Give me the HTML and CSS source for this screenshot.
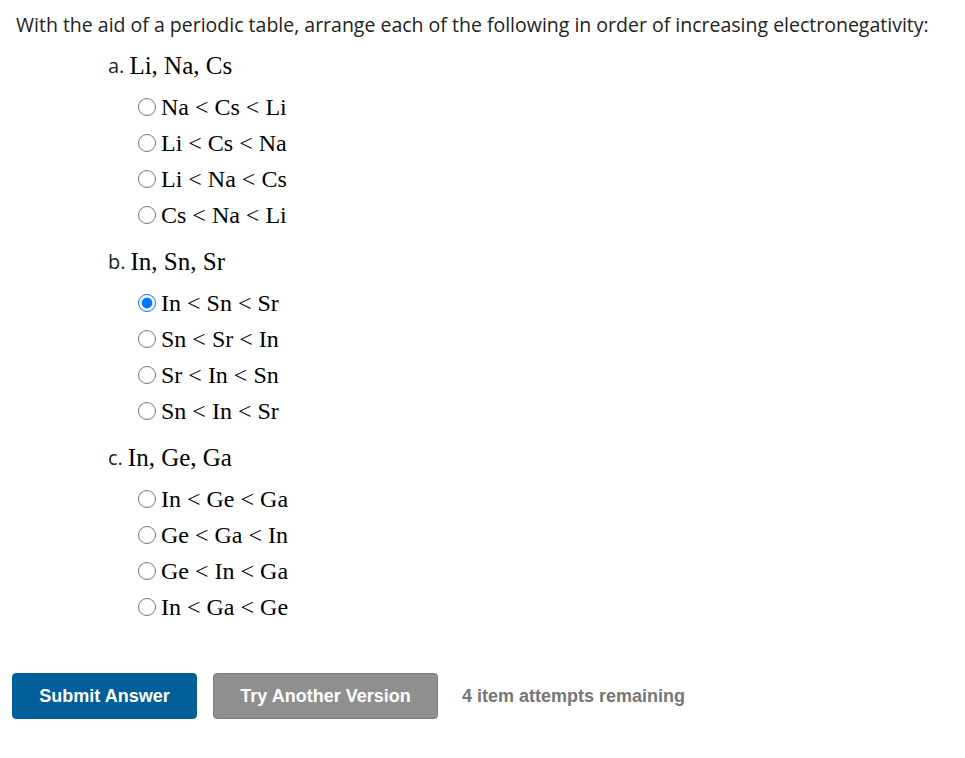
FILE: index.html
```html
<!DOCTYPE html>
<html lang="en">
<head>
    <meta charset="UTF-8">
    <title>Electronegativity</title>
    <link rel="stylesheet" href="styles.css">
</head>
<body>
    <div class="question">
        <p class="prompt">With the aid of a periodic table, arrange each of the following in order of increasing electronegativity:</p>

        <div class="part">
            <div class="part-label">a. <span class="math">Li, Na, Cs</span></div>
            <label class="option"><input type="radio" name="a"><span class="math">Na &lt; Cs &lt; Li</span></label>
            <label class="option"><input type="radio" name="a"><span class="math">Li &lt; Cs &lt; Na</span></label>
            <label class="option"><input type="radio" name="a"><span class="math">Li &lt; Na &lt; Cs</span></label>
            <label class="option"><input type="radio" name="a"><span class="math">Cs &lt; Na &lt; Li</span></label>
        </div>

        <div class="part">
            <div class="part-label">b. <span class="math">In, Sn, Sr</span></div>
            <label class="option"><input type="radio" name="b" checked><span class="math">In &lt; Sn &lt; Sr</span></label>
            <label class="option"><input type="radio" name="b"><span class="math">Sn &lt; Sr &lt; In</span></label>
            <label class="option"><input type="radio" name="b"><span class="math">Sr &lt; In &lt; Sn</span></label>
            <label class="option"><input type="radio" name="b"><span class="math">Sn &lt; In &lt; Sr</span></label>
        </div>

        <div class="part">
            <div class="part-label">c. <span class="math">In, Ge, Ga</span></div>
            <label class="option"><input type="radio" name="c"><span class="math">In &lt; Ge &lt; Ga</span></label>
            <label class="option"><input type="radio" name="c"><span class="math">Ge &lt; Ga &lt; In</span></label>
            <label class="option"><input type="radio" name="c"><span class="math">Ge &lt; In &lt; Ga</span></label>
            <label class="option"><input type="radio" name="c"><span class="math">In &lt; Ga &lt; Ge</span></label>
        </div>
    </div>

    <div class="actions">
        <button class="btn submit">Submit Answer</button>
        <button class="btn another">Try Another Version</button>
        <span class="attempts">4 item attempts remaining</span>
    </div>
</body>
</html>
```

FILE: styles.css
```css
body {
    margin: 0;
    padding: 8px 12px;
    background: #fff;
    color: #222;
    font-family: "Open Sans", sans-serif;
}

.prompt {
    margin: 0 0 5px 4px;
    font-size: 19.5px;
    line-height: 34px;
}

.part {
    margin-left: 96px;
    margin-bottom: 10px;
}

.part-label {
    display: flex;
    align-items: center;
    gap: 5px;
    height: 36px;
    font-size: 20px;
    margin-bottom: 6px;
}

.part-label .math {
    font-size: 25px;
}

.math {
    font-family: "Liberation Serif", serif;
    font-size: 24px;
    line-height: 1;
    color: #000;
}

.option {
    display: flex;
    align-items: center;
    height: 36px;
    margin-left: 30px;
}

.option input {
    width: 18px;
    height: 18px;
    margin: 0 5px 0 0;
}

.actions {
    display: flex;
    align-items: center;
    gap: 16px;
    margin-top: 48px;
}

.btn {
    height: 46px;
    border-radius: 4px;
    font-family: "Liberation Sans", Arial, sans-serif;
    font-size: 18px;
    font-weight: bold;
    color: #fff;
    cursor: pointer;
}

.submit {
    width: 185px;
    background: #005f99;
    border: 1px solid #005f99;
}

.another {
    width: 225px;
    background: #8f8f8f;
    border: 1px solid #7d7d7d;
}

.attempts {
    margin-left: 8px;
    font-family: "Liberation Sans", Arial, sans-serif;
    font-size: 18px;
    font-weight: bold;
    color: #767676;
}
```
